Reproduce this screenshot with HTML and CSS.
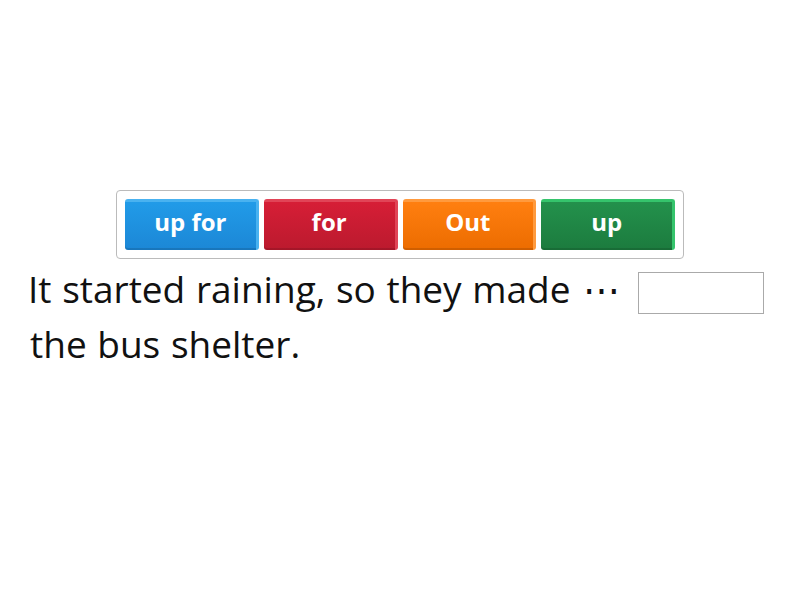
FILE: index.html
```html
<!DOCTYPE html>
<html lang="en">
<head>
  <meta charset="UTF-8" />
  <title>Complete the sentence</title>
  <link rel="stylesheet" href="styles.css">
</head>
<body>
  <div class="stage">
    <div class="tray">
      <div class="tile blue">up for</div>
      <div class="tile red">for</div>
      <div class="tile orange">Out</div>
      <div class="tile green">up</div>
    </div>

    <p class="sentence">
      <span class="word">It</span>
      <span class="word">started</span>
      <span class="word">raining,</span>
      <span class="word">so</span>
      <span class="word">they</span>
      <span class="word">made</span>
      <span class="dots">&#8943;</span>
      <span class="blank"></span>
      <span class="word first">the</span>
      <span class="word">bus</span>
      <span class="word">shelter.</span>
    </p>
  </div>
</body>
</html>
```

FILE: styles.css
```css
* {
  box-sizing: border-box;
}

body {
  margin: 0;
  background: #fff;
  font-family: 'Open Sans', 'Noto Sans', sans-serif;
  color: #111;
}

.stage {
  width: 800px;
  height: 600px;
  padding-top: 190px;
}

/* Caixa com as opções */
.tray {
  display: flex;
  gap: 5px;
  width: 568px;
  margin: 0 auto;
  padding: 8px;
  border: 1px solid #bbb;
  border-radius: 4px;
}

.tile {
  width: 134px;
  height: 51px;
  border-radius: 3px;
  color: #fff;
  font-weight: 700;
  font-size: 24px;
  line-height: 40px;
  text-align: center;
  border-top: 3px solid;
  border-right: 3px solid;
  box-shadow: inset 0 -2px 0 rgba(0, 0, 0, 0.12);
}

.blue {
  background: linear-gradient(#219be8, #1c87d6);
  border-color: #49b2f0;
}

.red {
  background: linear-gradient(#d61e36, #bb1a2e);
  border-color: #e14457;
}

.orange {
  background: linear-gradient(#ff7f10, #ec6c00);
  border-color: #ff9a3e;
}

.green {
  background: linear-gradient(#23914c, #1c7b3e);
  border-color: #35c46c;
}

/* Frase */
.sentence {
  margin: 2px 0 0 28px;
  width: 760px;
  font-size: 37px;
  line-height: 55px;
}

.word {
  margin-right: 1px;
}

.first {
  margin-left: 2px;
}

.dots {
  font-size: 37px;
  margin-left: 2px;
  margin-right: 8px;
}

.blank {
  display: inline-block;
  width: 126px;
  height: 42px;
  vertical-align: -11px;
  border: 1px solid #aaa;
}
```
